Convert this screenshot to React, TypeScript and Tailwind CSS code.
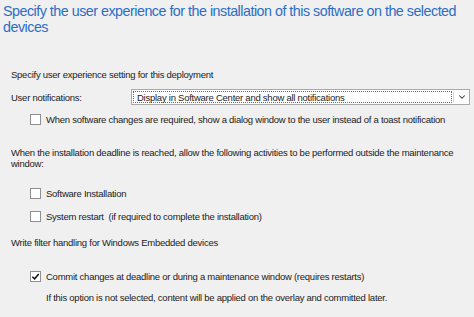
import { ChevronDown } from 'lucide-react';

const body = { fontFamily: '"Liberation Sans", Arial, sans-serif' };

function Box({ checked = false }: { checked?: boolean }) {
  return (
    <span className="flex h-[11px] w-[11px] shrink-0 items-center justify-center border border-[#8f8f8f] bg-white">
      {checked && (
        <svg viewBox="0 0 10 10" className="h-[9px] w-[9px]">
          <path d="M1.5 5.2 L4 7.6 L8.6 2.2" fill="none" stroke="#111" strokeWidth="1.6" />
        </svg>
      )}
    </span>
  );
}

function CheckRow({ label, checked, className = '' }: { label: string; checked?: boolean; className?: string }) {
  return (
    <div className={`flex items-center gap-[5px] pl-[19px] ${className}`}>
      <Box checked={checked} />
      <span className="whitespace-pre">{label}</span>
    </div>
  );
}

export default function App() {
  return (
    <div className="h-[317px] w-[474px] overflow-hidden bg-[#f0f0f0] text-[#1b1b1b]">
      {/* Page header */}
      <h1
        className="whitespace-nowrap px-[3px] pt-[3px] text-[14.3px] leading-[16px] tracking-[-0.5px] text-[#2c6dc4]"
        style={body}
      >
        Specify the user experience for the installation of this software on the selected
        <br />
        devices
      </h1>

      <div className="flex flex-col pl-[11px] text-[9.5px] leading-[11px] tracking-[-0.25px]" style={body}>
        <p className="mt-[34px]">Specify user experience setting for this deployment</p>

        {/* Notifications dropdown */}
        <div className="mt-[9px] flex items-center">
          <span className="w-[120px]">User notifications:</span>
          <div className="flex h-[16px] w-[339px] items-center border border-[#a9a9a9] bg-white">
            <div className="m-[1px] flex h-[12px] flex-1 items-center border border-dotted border-[#6b6b6b] pl-[3px]">
              Display in Software Center and show all notifications
            </div>
            <div className="flex w-[16px] items-center justify-center border-l border-[#d9d9d9]">
              <ChevronDown className="h-[10px] w-[10px] text-[#333]" strokeWidth={2.5} />
            </div>
          </div>
        </div>

        <CheckRow
          className="mt-[9px]"
          label="When software changes are required, show a dialog window to the user instead of a toast notification"
        />

        <p className="mt-[22px] pr-[10px]">
          When the installation deadline is reached, allow the following activities to be performed outside the maintenance
          <br />
          window:
        </p>

        <CheckRow className="mt-[19px]" label="Software Installation" />
        <CheckRow className="mt-[12px]" label="System restart  (if required to complete the installation)" />

        <p className="mt-[15px]">Write filter handling for Windows Embedded devices</p>

        <CheckRow className="mt-[23px]" checked label="Commit changes at deadline or during a maintenance window (requires restarts)" />

        <p className="mt-[10px] pl-[35px]">
          If this option is not selected, content will be applied on the overlay and committed later.
        </p>
      </div>
    </div>
  );
}
